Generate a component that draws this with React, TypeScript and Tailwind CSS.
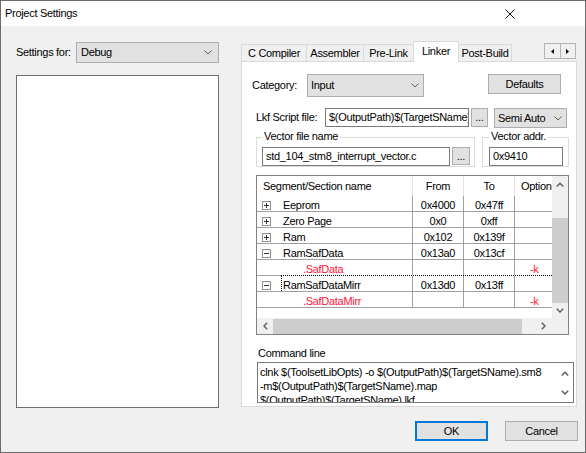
import React from 'react';

const ChevDown = () => (
  <svg width="8" height="5" viewBox="0 0 8 5" className="shrink-0">
    <polyline points="0.5,0.5 4,4 7.5,0.5" fill="none" stroke="#606060" strokeWidth="1" />
  </svg>
);

const Chev = ({ dir }: { dir: 'up' | 'down' | 'left' | 'right' }) => {
  if (dir === 'up' || dir === 'down') {
    const pts = dir === 'up' ? '0.8,4.5 4,1.3 7.2,4.5' : '0.8,0.8 4,4 7.2,0.8';
    return (
      <svg width="8" height="5" viewBox="0 0 8 5">
        <polyline points={pts} fill="none" stroke="#606060" strokeWidth="1.5" />
      </svg>
    );
  }
  const pts = dir === 'left' ? '4.2,0.8 1,4 4.2,7.2' : '0.8,0.8 4,4 0.8,7.2';
  return (
    <svg width="5" height="8" viewBox="0 0 5 8">
      <polyline points={pts} fill="none" stroke="#606060" strokeWidth="1.5" />
    </svg>
  );
};

const Expander = ({ open }: { open: boolean }) => (
  <svg width="9" height="9" viewBox="0 0 9 9">
    <rect x="0.5" y="0.5" width="8" height="8" fill="white" stroke="#919191" />
    <line x1="2" y1="4.5" x2="7" y2="4.5" stroke="#333" />
    {!open && <line x1="4.5" y1="2" x2="4.5" y2="7" stroke="#333" />}
  </svg>
);

function Select({ value, className }: { value: string; className: string }) {
  return (
    <div className={`flex items-center justify-between bg-[#e1e1e1] border border-[#adadad] ${className}`}>
      <span className="whitespace-nowrap leading-[13px]">{value}</span>
      <ChevDown />
    </div>
  );
}

type Row = { kind: 'plus' | 'minus' | 'sub'; name: string; from?: string; to?: string; opt?: string; focus?: boolean };

const rows: Row[] = [
  { kind: 'plus', name: 'Eeprom', from: '0x4000', to: '0x47ff' },
  { kind: 'plus', name: 'Zero Page', from: '0x0', to: '0xff' },
  { kind: 'plus', name: 'Ram', from: '0x102', to: '0x139f' },
  { kind: 'minus', name: 'RamSafData', from: '0x13a0', to: '0x13cf' },
  { kind: 'sub', name: '.SafData', opt: '-k' },
  { kind: 'minus', name: 'RamSafDataMirr', from: '0x13d0', to: '0x13ff', focus: true },
  { kind: 'sub', name: '.SafDataMirr', opt: '-k' },
];

const tabs = [
  { label: 'C Compiler', w: 'w-[66px]' },
  { label: 'Assembler', w: 'w-[58px]' },
  { label: 'Pre-Link', w: 'w-[51px]' },
  { label: 'Linker', w: 'w-[46px]', active: true },
  { label: 'Post-Build', w: 'w-[54px]' },
];

export default function App() {
  return (
    <div className="w-[586px] h-[453px] border border-[#6b6b6b] bg-[#f0f0f0] flex flex-col font-['Liberation_Sans',Arial,sans-serif] text-[11px] tracking-[-0.3px] text-black overflow-hidden select-none">
      {/* Title bar */}
      <div className="h-[25px] shrink-0 bg-white flex items-center justify-between pl-[4px]">
        <span className="leading-[13px]">Project Settings</span>
        <svg width="10" height="10" viewBox="0 0 10 10" className="mr-[70px]">
          <line x1="0.5" y1="0.5" x2="9.5" y2="9.5" stroke="#111" strokeWidth="1" />
          <line x1="9.5" y1="0.5" x2="0.5" y2="9.5" stroke="#111" strokeWidth="1" />
        </svg>
      </div>

      <div className="flex-1 flex flex-col">
        <div className="flex items-start">
          {/* Left column */}
          <div className="ml-[15px] mt-[16px] w-[203px] flex flex-col">
            <div className="flex items-center h-[21px]">
              <span className="w-[60px] leading-[13px]">Settings for:</span>
              <Select value="Debug" className="w-[143px] h-[21px] pl-[4px] pr-[6px]" />
            </div>
            <div className="mt-[12px] h-[333px] bg-white border border-[#6e6e6e]" />
          </div>

          {/* Tab control */}
          <div className="ml-[22px] mt-[15px] w-[336px] flex flex-col">
            <div className="relative z-10 flex items-end h-[20px]">
              {tabs.map((t, i) =>
                t.active ? (
                  <div
                    key={t.label}
                    className={`relative z-10 -ml-px h-[21px] mb-[-1px] bg-white border border-b-0 border-[#d9d9d9] flex justify-center pt-[3px] leading-[13px] ${t.w}`}
                  >
                    {t.label}
                  </div>
                ) : (
                  <div
                    key={t.label}
                    className={`h-[17px] bg-[#f0f0f0] border border-b-0 border-[#d9d9d9] flex justify-center pt-[2px] leading-[13px] whitespace-nowrap ${i > 0 ? '-ml-px' : ''} ${t.w}`}
                  >
                    {t.label}
                  </div>
                )
              )}
              <div className="ml-auto self-start mt-[2px] mr-[1px] w-[32px] h-[16px] flex border border-[#b4b4b4] bg-[#f0f0f0]">
                <div className="flex-1 flex items-center justify-center">
                  <svg width="3" height="5" viewBox="0 0 3 5"><polygon points="3,0 0,2.5 3,5" fill="#000" /></svg>
                </div>
                <div className="flex-1 flex items-center justify-center border-l border-[#b4b4b4]">
                  <svg width="3" height="5" viewBox="0 0 3 5"><polygon points="0,0 3,2.5 0,5" fill="#000" /></svg>
                </div>
              </div>
            </div>

            {/* Tab panel */}
            <div className="h-[346px] bg-white border border-[#d9d9d9] flex flex-col">
              {/* Category row */}
              <div className="mt-[12px] flex items-start h-[23px]">
                <span className="ml-[10px] w-[55px] h-[23px] flex items-center leading-[13px]">Category:</span>
                <Select value="Input" className="w-[117px] h-[23px] pl-[3px] pr-[4px]" />
                <div className="ml-[64px] w-[73px] h-[20px] bg-[#e1e1e1] border border-[#adadad] flex items-center justify-center leading-[13px]">
                  Defaults
                </div>
              </div>

              {/* Lkf row */}
              <div className="mt-[11px] flex items-start h-[20px]">
                <span className="ml-[14px] w-[69px] h-[19px] flex items-center leading-[13px] whitespace-nowrap">Lkf Script file:</span>
                <div className="w-[144px] h-[19px] bg-white border border-[#7a7a7a] flex items-center pl-[3px] overflow-hidden whitespace-nowrap leading-[13px]">
                  $(OutputPath)$(TargetSName).lkf
                </div>
                <div className="ml-[2px] w-[17px] h-[19px] bg-[#e1e1e1] border border-[#adadad] flex items-center justify-center leading-[13px]">
                  ...
                </div>
                <Select value="Semi Auto" className="ml-[6px] w-[73px] h-[20px] pl-[3px] pr-[4px]" />
              </div>

              {/* Group boxes */}
              <div className="mt-[9px] flex items-start">
                <div className="relative ml-[14px] w-[219px] h-[30px] border border-[#dcdcdc] pl-[5px] pt-[9px] flex items-start">
                  <span className="absolute left-[5px] -top-[8px] px-[2px] bg-white leading-[13px] whitespace-nowrap">Vector file name</span>
                  <div className="w-[188px] h-[19px] bg-white border border-[#7a7a7a] flex items-center pl-[3px] overflow-hidden whitespace-nowrap leading-[13px]">
                    std_104_stm8_interrupt_vector.c
                  </div>
                  <div className="ml-[2px] w-[18px] h-[18px] bg-[#e1e1e1] border border-[#adadad] flex items-center justify-center leading-[13px]">
                    ...
                  </div>
                </div>
                <div className="relative ml-[7px] w-[87px] h-[30px] border border-[#dcdcdc] pl-[6px] pt-[9px]">
                  <span className="absolute left-[6px] -top-[8px] px-[2px] bg-white leading-[13px] whitespace-nowrap">Vector addr.</span>
                  <div className="w-[74px] h-[19px] bg-white border border-[#7a7a7a] flex items-center pl-[3px] leading-[13px]">
                    0x9410
                  </div>
                </div>
              </div>

              {/* List view */}
              <div className="mt-[8px] ml-[14px] w-[313px] h-[160px] border border-[#828282] flex flex-col bg-white">
                <div className="flex h-[142px]">
                  <div className="w-[295px] flex flex-col overflow-hidden">
                    <div className="flex h-[20px] shrink-0 bg-white">
                      <div className="w-[156px] shrink-0 pl-[6px] pt-[1px] flex items-center border-r border-[#e5e5e5] whitespace-nowrap">
                        Segment/Section name
                      </div>
                      <div className="w-[51px] shrink-0 pt-[1px] flex items-center justify-center border-r border-[#e5e5e5]">From</div>
                      <div className="w-[51px] shrink-0 pt-[1px] flex items-center justify-center border-r border-[#e5e5e5]">To</div>
                      <div className="flex-1 pl-[6px] pt-[1px] flex items-center overflow-hidden whitespace-nowrap">Option</div>
                    </div>
                    {rows.map((r, i) => (
                      <div key={i} className="relative flex h-[16px] shrink-0 border-b border-[#a0a0a0]">
                        <div className="w-[155px] shrink-0 flex items-start whitespace-nowrap">
                          {r.kind !== 'sub' ? (
                            <>
                              <div className="ml-[5px] mt-[5px] flex">
                                <Expander open={r.kind === 'minus'} />
                              </div>
                              <span className="ml-[12px] pt-[3px] leading-[12px]">{r.name}</span>
                            </>
                          ) : (
                            <span className="ml-[46px] pt-[3px] leading-[12px] text-[#ff143c]">{r.name}</span>
                          )}
                        </div>
                        <div className="w-[51px] shrink-0 border-l border-[#a0a0a0] text-center pt-[3px] leading-[12px]">{r.from ?? ''}</div>
                        <div className="w-[51px] shrink-0 border-l border-[#a0a0a0] text-center pt-[3px] leading-[12px]">{r.to ?? ''}</div>
                        <div className="flex-1 border-l border-[#a0a0a0] pl-[15px] pt-[3px] leading-[12px] text-[#ff143c]">{r.opt ?? ''}</div>
                        {r.focus && (
                          <>
                            <div className="absolute left-[24px] right-0 top-[-1px] h-[1px] bg-[repeating-linear-gradient(90deg,#000_0_1px,#fff_1px_2px)]" />
                            <div className="absolute left-[24px] top-0 w-[1px] h-[15px] bg-[repeating-linear-gradient(180deg,#000_0_1px,#fff_1px_2px)]" />
                          </>
                        )}
                      </div>
                    ))}
                  </div>
                  {/* vertical scrollbar */}
                  <div className="w-[16px] flex flex-col bg-[#f0f0f0]">
                    <div className="h-[17px] flex items-center justify-center">
                      <Chev dir="up" />
                    </div>
                    <div className="h-[85px] mt-[25px] bg-[#cdcdcd]" />
                    <div className="h-[15px] flex items-center justify-center">
                      <Chev dir="down" />
                    </div>
                  </div>
                </div>
                {/* horizontal scrollbar */}
                <div className="flex h-[16px] bg-[#f0f0f0]">
                  <div className="w-[16px] flex items-center justify-center">
                    <Chev dir="left" />
                  </div>
                  <div className="w-[249px] h-[15px] mt-[1px] bg-[#cdcdcd]" />
                  <div className="flex-1" />
                  <div className="w-[17px] flex items-center justify-center">
                    <Chev dir="right" />
                  </div>
                  <div className="w-[16px]" />
                </div>
              </div>

              {/* Command line */}
              <span className="mt-[12px] ml-[16px] h-[13px] leading-[13px]">Command line</span>
              <div className="mt-[2px] ml-[15px] w-[317px] h-[41px] bg-white border border-[#7a7a7a] flex">
                <div className="flex-1 overflow-hidden pl-[2px] pt-[2px] leading-[14px] whitespace-pre">
                  {'clnk $(ToolsetLibOpts) -o $(OutputPath)$(TargetSName).sm8\n-m$(OutputPath)$(TargetSName).map\n$(OutputPath)$(TargetSName).lkf'}
                </div>
                <div className="w-[17px] flex flex-col items-center justify-between pt-[8px] pb-[7px]">
                  <Chev dir="up" />
                  <Chev dir="down" />
                </div>
              </div>
            </div>
          </div>
        </div>

        {/* Buttons */}
        <div className="flex justify-end mt-[13px] mr-[7px]">
          <div className="w-[73px] h-[20px] border-2 border-[#0078d7] bg-[#e1e1e1] flex items-center justify-center leading-[13px]">
            OK
          </div>
          <div className="ml-[17px] w-[73px] h-[20px] border border-[#adadad] bg-[#e1e1e1] flex items-center justify-center leading-[13px]">
            Cancel
          </div>
        </div>
      </div>
    </div>
  );
}
